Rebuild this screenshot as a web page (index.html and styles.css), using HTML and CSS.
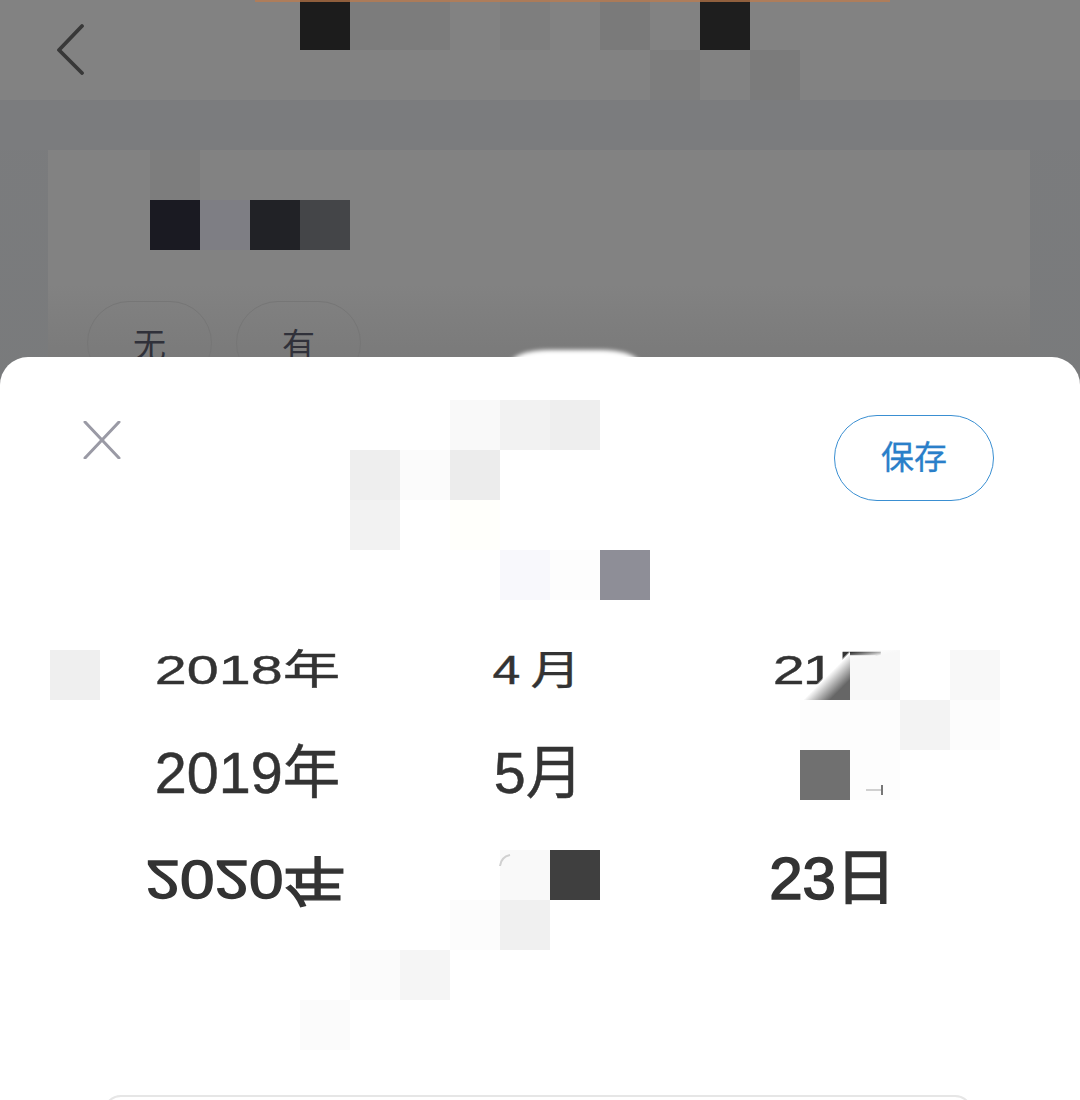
FILE: index.html
```html
<!DOCTYPE html>
<html lang="zh-CN">
<head>
<meta charset="utf-8">
<title>日期选择</title>
<link rel="stylesheet" href="styles.css">
</head>
<body>
<main class="page">
  <section class="backdrop">
    <header class="topbar">
      <svg class="back" viewBox="0 0 32 52" aria-hidden="true"><path d="M27 3 L4 27 L27 50"/></svg>
    </header>
    <div class="band"></div>
    <div class="card">
      <div class="pills">
        <span class="pill">无</span>
        <span class="pill">有</span>
      </div>
    </div>
  </section>
  <section class="sheet">
    <div class="bump"></div>
    <div class="sheet-head">
      <svg class="close" viewBox="0 0 38 38" aria-hidden="true"><path d="M2 1 L36 37 M36 1 L2 37"/></svg>
      <button class="save">保存</button>
    </div>
    <div class="picker">
      <div class="cell"><span class="far">2018年</span></div>
      <div class="cell"><span class="far far-month">4月</span></div>
      <div class="cell"><span class="far far-day">21日</span></div>
      <div class="cell"><span>2019年</span></div>
      <div class="cell"><span>5月</span></div>
      <div class="cell"></div>
      <div class="cell"><span class="current flip">2020年</span></div>
      <div class="cell"></div>
      <div class="cell"><span class="current">23日</span></div>
    </div>
    <div class="footer-box"></div>
  </section>
  <svg class="mosaic" viewBox="0 0 1080 1100" aria-hidden="true">
    <defs>
      <linearGradient id="fade-dark" x1="0" y1="0" x2="1" y2="1">
        <stop offset="0.5" stop-color="#fff" stop-opacity="0"/>
        <stop offset="0.53" stop-color="#fff" stop-opacity="1"/>
        <stop offset="0.8" stop-color="#666"/>
      </linearGradient>
      <linearGradient id="fade-light" x1="0" y1="0" x2="0.2" y2="1">
        <stop offset="0.05" stop-color="#f8f8f8" stop-opacity="0"/>
        <stop offset="0.22" stop-color="#f8f8f8" stop-opacity="1"/>
      </linearGradient>
    </defs>
    <rect x="300" y="0" width="50" height="50" fill="#1c1c1c"/>
    <rect x="350" y="0" width="100" height="50" fill="#7c7c7c"/>
    <rect x="500" y="0" width="50" height="50" fill="#7e7e7e"/>
    <rect x="600" y="0" width="50" height="50" fill="#7a7a7a"/>
    <rect x="700" y="0" width="50" height="50" fill="#1e1e1e"/>
    <rect class="stripe" x="255" y="0" width="635" height="2"/>
    <rect x="650" y="50" width="50" height="50" fill="#7d7d7d"/>
    <rect x="750" y="50" width="50" height="50" fill="#7b7b7b"/>
    <rect x="150" y="150" width="50" height="50" fill="#7d7d7d"/>
    <rect x="150" y="200" width="50" height="50" fill="#1a1a22"/>
    <rect x="200" y="200" width="50" height="50" fill="#7e7e84"/>
    <rect x="250" y="200" width="50" height="50" fill="#212226"/>
    <rect x="300" y="200" width="50" height="50" fill="#444548"/>
    <rect x="450" y="400" width="50" height="50" fill="#f9f9f9"/>
    <rect x="500" y="400" width="50" height="50" fill="#f2f2f2"/>
    <rect x="550" y="400" width="50" height="50" fill="#eeeeee"/>
    <rect x="350" y="450" width="50" height="50" fill="#eeeeee"/>
    <rect x="400" y="450" width="50" height="50" fill="#fbfbfb"/>
    <rect x="450" y="450" width="50" height="50" fill="#ececec"/>
    <rect x="350" y="500" width="50" height="50" fill="#f2f2f2"/>
    <rect x="450" y="500" width="50" height="50" fill="#fffffb"/>
    <rect x="500" y="550" width="50" height="50" fill="#f8f8fc"/>
    <rect x="550" y="550" width="50" height="50" fill="#fdfdfd"/>
    <rect x="600" y="550" width="50" height="50" fill="#8e8e97"/>
    <rect x="50" y="650" width="50" height="50" fill="#efefef"/>
    <rect x="800" y="650" width="50" height="50" fill="url(#fade-dark)"/>
    <rect x="850" y="650" width="50" height="50" fill="url(#fade-light)"/>
    <rect x="950" y="650" width="50" height="50" fill="#f8f8f8"/>
    <rect x="800" y="700" width="100" height="50" fill="#fdfdfd"/>
    <rect x="900" y="700" width="50" height="50" fill="#f3f3f3"/>
    <rect x="950" y="700" width="50" height="50" fill="#fcfcfc"/>
    <rect x="800" y="750" width="50" height="50" fill="#707070"/>
    <rect x="850" y="750" width="50" height="50" fill="#fdfdfd"/>
    <path class="speck" d="M866 790 H882"/>
    <path class="speck-dark" d="M882 785 V795"/>
    <rect x="500" y="850" width="50" height="50" fill="#f9f9f9"/>
    <path class="speck" d="M500 866 Q501 857 510 855"/>
    <rect x="550" y="850" width="50" height="50" fill="#3f3f3f"/>
    <rect x="450" y="900" width="50" height="50" fill="#fcfcfc"/>
    <rect x="500" y="900" width="50" height="50" fill="#f0f0f0"/>
    <rect x="350" y="950" width="50" height="50" fill="#fbfbfb"/>
    <rect x="400" y="950" width="50" height="50" fill="#f5f5f5"/>
    <rect x="300" y="1000" width="50" height="50" fill="#fbfbfb"/>
  </svg>
</main>
</body>
</html>
```
FILE: styles.css
```css
* { box-sizing: border-box; }
html, body { margin: 0; padding: 0; }
body {
  font-family: "Liberation Sans", "Noto Sans CJK SC", sans-serif;
  background: #7b7c7e;
}
.page {
  position: relative;
  width: 1080px;
  height: 1100px;
  overflow: hidden;
  background: linear-gradient(#7b7c7e, #767878);
}
.backdrop {
  height: 357px;
  overflow: hidden;
}
.topbar {
  height: 100px;
  background: #828282;
  padding: 23px 0 0 55px;
}
.back {
  display: block;
  width: 32px;
  height: 52px;
  fill: none;
  stroke: #383838;
  stroke-width: 3.8;
  stroke-linecap: round;
  stroke-linejoin: round;
}
.band {
  height: 50px;
  background: #7b7c7e;
}
.card {
  height: 207px;
  margin: 0 50px 0 48px;
  padding: 151px 0 0 39px;
  background: linear-gradient(#828282 65%, #7a7a7a);
}
.pills {
  display: flex;
  gap: 24px;
}
.pill {
  width: 125px;
  height: 84px;
  border: 1px solid #767676;
  border-radius: 42px;
  display: flex;
  align-items: center;
  justify-content: center;
  font-size: 33px;
  color: #30313a;
}
.sheet {
  position: relative;
  height: 743px;
  background: #fff;
  border-radius: 28px 28px 0 0;
}
.bump {
  position: absolute;
  left: 510px;
  top: -7px;
  width: 130px;
  height: 14px;
  background: #fff;
  border-radius: 40px 40px 0 0 / 14px 14px 0 0;
  filter: blur(2px);
}
.sheet-head {
  position: relative;
  display: flex;
  justify-content: space-between;
  align-items: flex-start;
  padding: 58px 86px 0 83px;
}
.close {
  width: 38px;
  height: 38px;
  margin-top: 6px;
  fill: none;
  stroke: #9a9aa5;
  stroke-width: 3;
  stroke-linecap: round;
}
.save {
  width: 160px;
  height: 86px;
  padding: 0 0 6px;
  border: 1.7px solid #3a8fd2;
  border-radius: 43px;
  background: #fff;
  color: #2a7fc9;
  font-family: inherit;
  font-size: 33px;
  -webkit-text-stroke: 0.3px #2a7fc9;
}
.picker {
  display: grid;
  grid-template-columns: 291px 291px 297px;
  grid-auto-rows: 105px;
  margin: 115px 0 0 102px;
  color: #333;
}
.cell {
  display: flex;
  align-items: center;
  justify-content: center;
  font-size: 57.5px;
  line-height: 1;
  -webkit-text-stroke: 0.5px #333;
}
.cell span { display: inline-block; }
.far { transform: translateY(1px) scaleY(0.72); }
.far-month {
  font-size: 50px;
  letter-spacing: 10px;
  margin-left: 6px;
  transform: translateY(1px) scaleY(0.8);
}
.far-day {
  letter-spacing: -2px;
  margin-left: -4px;
}
.current {
  font-size: 60px;
  -webkit-text-stroke: 1.6px #333;
}
.flip {
  font-size: 62px;
  margin-left: -4px;
  transform: scaleY(-0.86);
}
.footer-box {
  width: 870px;
  height: 200px;
  margin: 164px 0 0 103px;
  border: 2px solid #e6e6e6;
  border-radius: 18px;
}
.mosaic {
  position: absolute;
  left: 0;
  top: 0;
  width: 1080px;
  height: 1100px;
}
.stripe {
  fill: #c07a4a;
  opacity: 0.7;
}
.speck {
  fill: none;
  stroke: #d0d0d0;
  stroke-width: 2;
}
.speck-dark {
  fill: none;
  stroke: #777;
  stroke-width: 2;
}
```
